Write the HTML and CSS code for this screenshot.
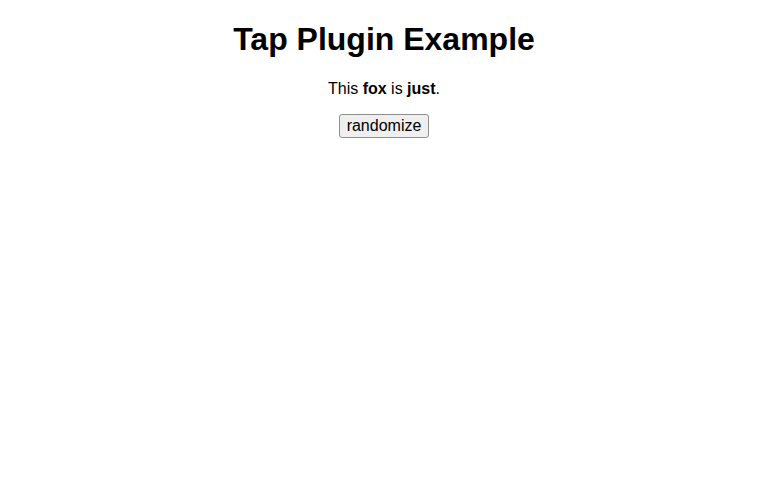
FILE: index.html
```html
<!DOCTYPE html>
<html>
<head>
<meta charset="utf-8">
<title>Tap Plugin Example</title>
<link rel="stylesheet" href="styles.css">
</head>
<body>
<h1 class="title">Tap Plugin Example</h1>
<p class="sentence">This <b>fox</b> is <b>just</b>.</p>
<p class="actions"><button class="btn">randomize</button></p>
</body>
</html>
```
FILE: styles.css
```css
body {
  margin: 0;
  padding: 0 8px;
  font-family: "Liberation Sans", Arial, sans-serif;
  text-align: center;
  color: #000;
  background: #fff;
}
.title {
  font-size: 32px;
  margin: 0;
  padding-top: 21px;
  margin-bottom: 22px;
}
.sentence, .actions {
  font-size: 16px;
  margin: 16px 0;
}
.btn {
  font-family: "Liberation Sans", Arial, sans-serif;
  font-size: 16px;
  padding: 2px 7px;
  border: 1px solid #8f8f8f;
  border-radius: 3px;
  background: #efefef;
  color: #000;
}
```
